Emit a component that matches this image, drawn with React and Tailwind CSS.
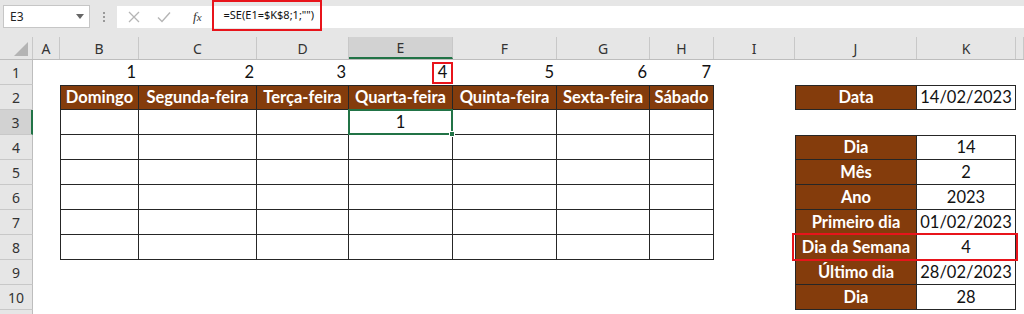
import React from 'react';

const cols = [
  { k: 'A', w: 27 },
  { k: 'B', w: 79 },
  { k: 'C', w: 118 },
  { k: 'D', w: 92 },
  { k: 'E', w: 104 },
  { k: 'F', w: 104 },
  { k: 'G', w: 93 },
  { k: 'H', w: 64 },
  { k: 'I', w: 81 },
  { k: 'J', w: 122 },
  { k: 'K', w: 99 },
  { k: '', w: 8 },
];

const days = ['Domingo', 'Segunda-feira', 'Terça-feira', 'Quarta-feira', 'Quinta-feira', 'Sexta-feira', 'Sábado'];

const info = [
  ['Dia', '14'],
  ['Mês', '2'],
  ['Ano', '2023'],
  ['Primeiro dia', '01/02/2023'],
  ['Dia da Semana', '4'],
  ['Último dia', '28/02/2023'],
  ['Dia', '28'],
];

const cellFont = { fontFamily: 'Lato, "Open Sans", sans-serif' };

function Cell({ row, c }) {
  // c: 0 = A ... 11 = L
  let cls = 'h-[25px] flex items-center text-[16.5px] text-[#111] whitespace-nowrap';
  let content = null;
  let extra = null;

  // numbers over the week table
  if (row === 1 && c >= 1 && c <= 7) {
    cls += ' justify-end pr-[3px]';
    content = c === 4
      ? <span className="border-2 border-[#e8141b] h-[22px] w-[21px] flex items-center justify-center -mr-[3px]">4</span>
      : String(c);
  }

  // week table B2:H8
  if (row >= 2 && row <= 8 && c >= 1 && c <= 7) {
    cls += ' border-r border-b border-[#262626] justify-center';
    if (c === 1) cls += ' border-l';
    if (row === 2) {
      cls += ' border-t bg-[#843c0c] text-white font-bold';
      content = days[c - 1];
    }
    if (row === 3 && c === 4) {
      cls += ' relative';
      content = '1';
      extra = (
        <div className="absolute -left-px -top-px -right-px -bottom-px border-2 border-[#217346]">
          <div className="absolute -right-[4px] -bottom-[4px] w-[6px] h-[6px] bg-[#217346] border border-white" />
        </div>
      );
    }
  }

  // Data J2:K2
  if (row === 2 && (c === 9 || c === 10)) {
    cls += ' border-t border-b border-r border-[#262626] justify-center';
    if (c === 9) {
      cls += ' border-l bg-[#843c0c] text-white font-bold';
      content = 'Data';
    } else {
      content = '14/02/2023';
    }
  }

  // info J4:K10
  if (row >= 4 && row <= 10 && (c === 9 || c === 10)) {
    const item = info[row - 4];
    cls += ' border-b border-r border-[#262626] justify-center';
    if (row === 4) cls += ' border-t';
    if (c === 9) {
      cls += ' border-l bg-[#843c0c] text-white font-bold relative';
      content = item[0];
      if (row === 8) {
        extra = <div className="absolute -left-[4px] -top-[2px] w-[226px] h-[28px] border-2 border-[#e8141b] z-10" />;
      }
    } else {
      content = item[1];
    }
  }

  return (
    <div className={cls} style={cellFont}>
      {content}
      {extra}
    </div>
  );
}

export default function App() {
  const rows = [1, 2, 3, 4, 5, 6, 7, 8, 9, 10, 11];
  return (
    <div className="w-[1024px] h-[314px] overflow-hidden bg-white" style={{ fontFamily: '"Noto Sans", "Open Sans", sans-serif' }}>
      {/* formula bar */}
      <div className="h-[37px] bg-[#e6e6e6] flex items-start pt-[5px] relative">
        <div className="ml-[3px] w-[87px] h-[23px] bg-white border border-[#c6c6c6] flex items-center justify-between pl-[6px] pr-[5px]">
          <span className="text-[12px] text-[#222]">E3</span>
          <svg width="8" height="5" viewBox="0 0 8 5"><path d="M0 0h8L4 5z" fill="#666" /></svg>
        </div>
        <div className="w-[27px] h-[23px] flex flex-col items-center justify-center gap-[2px]">
          <div className="w-[2px] h-[2px] bg-[#999]" />
          <div className="w-[2px] h-[2px] bg-[#999]" />
          <div className="w-[2px] h-[2px] bg-[#999]" />
        </div>
        <div className="flex-1 h-[22px] mt-[1px] bg-white flex items-center">
          <svg width="12" height="12" viewBox="0 0 12 12" className="ml-[11px]">
            <path d="M1 1l10 10M11 1L1 11" stroke="#b5b5b5" strokeWidth="1.3" />
          </svg>
          <svg width="14" height="12" viewBox="0 0 14 12" className="ml-[17px]">
            <path d="M1 6.5l4 4L13 1.5" stroke="#b5b5b5" strokeWidth="1.4" fill="none" />
          </svg>
          <span className="ml-[22px] text-[13px] text-[#333] italic" style={{ fontFamily: '"Liberation Serif", serif' }}>
            f<span className="text-[11px]">x</span>
          </span>
          <div className="ml-[10px] h-[31px] -mt-[3px] pl-[10px] pr-[6px] border-2 border-[#e8141b] flex items-center text-[11px] text-[#111]">
            =SE(E1=$K$8;1;"")
          </div>
        </div>
      </div>

      {/* column headers */}
      <div className="flex h-[23px] bg-[#e6e6e6] border-b border-[#bdbdbd]">
        <div className="w-[33px] h-full relative border-r border-[#c8c8c8]">
          <svg width="14" height="14" viewBox="0 0 14 14" className="absolute right-[4px] bottom-[3px]">
            <path d="M14 0V14H0z" fill="#b4b4b4" />
          </svg>
        </div>
        {cols.map((col, i) => (
          <div
            key={i}
            style={{ width: col.w }}
            className={
              col.k === 'E'
                ? 'h-full shrink-0 flex items-center justify-center text-[14px] text-[#333] bg-[#d2d2d2] border-r border-[#c8c8c8] border-b-2 border-b-[#217346]'
                : 'h-full shrink-0 flex items-center justify-center text-[14px] text-[#333] border-r border-[#c8c8c8]'
            }
          >
            {col.k}
          </div>
        ))}
      </div>

      {/* grid */}
      <div className="grid grid-cols-[33px_27px_79px_118px_92px_104px_104px_93px_64px_81px_122px_99px_8px]">
        {rows.map((r) => (
          <React.Fragment key={r}>
            <div
              className={
                r === 3
                  ? 'h-[25px] flex items-center justify-center text-[14px] text-[#333] bg-[#d2d2d2] border-b border-[#c8c8c8] border-r-2 border-r-[#217346]'
                  : 'h-[25px] flex items-center justify-center text-[14px] text-[#333] bg-[#e6e6e6] border-b border-[#c8c8c8] border-r border-r-[#bdbdbd]'
              }
            >
              {r <= 10 ? r : ''}
            </div>
            {cols.map((col, c) => (
              <Cell key={c} row={r} c={c} />
            ))}
          </React.Fragment>
        ))}
      </div>
    </div>
  );
}
